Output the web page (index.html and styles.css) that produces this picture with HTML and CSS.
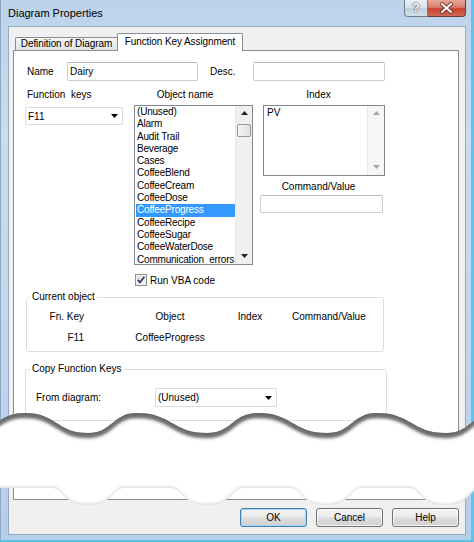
FILE: index.html
```html
<!DOCTYPE html>
<html>
<head>
<meta charset="utf-8">
<title>Diagram Properties</title>
<link rel="stylesheet" href="styles.css">
</head>
<body>
<div class="window">
  <div class="titlebar">
    <span class="title">Diagram Properties</span>
    <div class="caption">
      <div class="cbtn cbtn-help">?</div>
      <div class="cbtn cbtn-close">
        <svg width="37" height="16" viewBox="0 0 37 16">
          <path d="M14 4 L23 12 M23 4 L14 12" stroke="#6a2a22" stroke-width="3.8" stroke-linecap="round"/>
          <path d="M14 4 L23 12 M23 4 L14 12" stroke="#ffffff" stroke-width="2.2" stroke-linecap="round"/>
        </svg>
      </div>
    </div>
  </div>
  <div class="client">
    <div class="tabs">
      <div class="tab">Definition of Diagram</div>
      <div class="tab active">Function Key Assignment</div>
    </div>
    <div class="panel">
      <div class="row-name">
        <span class="lbl lbl-name">Name</span>
        <div class="input name-in">Dairy</div>
        <span class="lbl lbl-desc">Desc.</span>
        <div class="input desc-in"></div>
      </div>
      <div class="cols">
        <div class="col col-fk">
          <div class="col-head">Function&nbsp; keys</div>
          <div class="combo fk-combo"><span>F11</span><svg class="dd" width="7" height="4" viewBox="0 0 7 4"><path d="M0 0 H7 L3.5 4 Z" fill="#000"/></svg></div>
        </div>
        <div class="col col-obj">
          <div class="col-head">Object name</div>
          <div class="listbox obj-list">
            <ul class="items">
              <li>(Unused)</li>
              <li>Alarm</li>
              <li>Audit Trail</li>
              <li>Beverage</li>
              <li>Cases</li>
              <li>CoffeeBlend</li>
              <li>CoffeeCream</li>
              <li>CoffeeDose</li>
              <li class="sel">CoffeeProgress</li>
              <li>CoffeeRecipe</li>
              <li>CoffeeSugar</li>
              <li>CoffeeWaterDose</li>
              <li>Communication_errors</li>
            </ul>
            <div class="vscroll">
              <div class="sb-btn up"><svg width="7" height="4" viewBox="0 0 7 4"><path d="M0 4 H7 L3.5 0 Z" fill="#222"/></svg></div>
              <div class="sb-track"><div class="sb-thumb"></div></div>
              <div class="sb-btn down"><svg width="7" height="4" viewBox="0 0 7 4"><path d="M0 0 H7 L3.5 4 Z" fill="#222"/></svg></div>
            </div>
          </div>
          <div class="check-row">
            <span class="checkbox"><svg width="10" height="10" viewBox="0 0 10 10"><path d="M1.8 4.8 L4 7.4 L8.4 1.8" fill="none" stroke="#31456e" stroke-width="1.8"/></svg></span>
            <span>Run VBA code</span>
          </div>
        </div>
        <div class="col col-idx">
          <div class="col-head">Index</div>
          <div class="listbox idx-list">
            <div class="idx-items">PV</div>
            <div class="vscroll disabled">
              <div class="sb-btn up"><svg width="7" height="4" viewBox="0 0 7 4"><path d="M0 4 H7 L3.5 0 Z" fill="#a6a6a6"/></svg></div>
              <div class="sb-track"></div>
              <div class="sb-btn down"><svg width="7" height="4" viewBox="0 0 7 4"><path d="M0 0 H7 L3.5 4 Z" fill="#a6a6a6"/></svg></div>
            </div>
          </div>
          <div class="col-head cmd-head">Command/Value</div>
          <div class="input cmd-in"></div>
        </div>
      </div>
      <fieldset class="group current">
        <legend>Current object</legend>
        <div class="co-grid">
          <span class="c1">Fn. Key</span><span class="c2">Object</span><span class="c3">Index</span><span class="c4">Command/Value</span>
          <span class="c1">F11</span><span class="c2">CoffeeProgress</span><span class="c3"></span><span class="c4"></span>
        </div>
      </fieldset>
      <fieldset class="group copy">
        <legend>Copy Function Keys</legend>
        <div class="from-row">
          <span class="from-lbl">From diagram:</span>
          <div class="combo from-combo"><span>(Unused)</span><svg class="dd" width="7" height="4" viewBox="0 0 7 4"><path d="M0 0 H7 L3.5 4 Z" fill="#000"/></svg></div>
        </div>
      </fieldset>
    </div>
    <div class="buttons">
      <div class="btn default">OK</div>
      <div class="btn">Cancel</div>
      <div class="btn">Help</div>
    </div>
  </div>
</div>
<svg class="tear" width="474" height="542" viewBox="0 0 474 542">
  <defs>
    <clipPath id="paper">
      <path d="M-33 433 C-4 433 -4 413 25 413 C56.5 413 56.5 433 88 433 C112.5 433 112.5 413 137 413 C172 413 172 433 207 433 C232.5 433 232.5 413 258 413 C292.5 413 292.5 433 327 433 C352 433 352 413 377 413 C411.5 413 411.5 433 446 433 C471 433 471 413 496 413 L496 488 L481 488 C469 488 471 505 445 505 C419 505 421 488 409 488 L362 488 C350 488 352 505 326 505 C300 505 302 488 290 488 L243 488 C231 488 233 505 207 505 C181 505 183 488 171 488 L124 488 C112 488 114 505 88 505 C62 505 64 488 52 488 L-33 488 Z"/>
    </clipPath>
    <filter id="blur" x="-10%" y="-50%" width="120%" height="200%">
      <feGaussianBlur stdDeviation="2.2"/>
    </filter>
    <filter id="blur1" x="-10%" y="-50%" width="120%" height="200%">
      <feGaussianBlur stdDeviation="1"/>
    </filter>
    <filter id="blur2" x="-10%" y="-50%" width="120%" height="200%">
      <feGaussianBlur stdDeviation="1.4"/>
    </filter>
  </defs>
  <path fill="#ffffff" d="M-33 433 C-4 433 -4 413 25 413 C56.5 413 56.5 433 88 433 C112.5 433 112.5 413 137 413 C172 413 172 433 207 433 C232.5 433 232.5 413 258 413 C292.5 413 292.5 433 327 433 C352 433 352 413 377 413 C411.5 413 411.5 433 446 433 C471 433 471 413 496 413 L496 488 L481 488 C469 488 471 505 445 505 C419 505 421 488 409 488 L362 488 C350 488 352 505 326 505 C300 505 302 488 290 488 L243 488 C231 488 233 505 207 505 C181 505 183 488 171 488 L124 488 C112 488 114 505 88 505 C62 505 64 488 52 488 L-33 488 Z"/>
  <g clip-path="url(#paper)">
    <path fill="#3c3c3c" opacity="0.9" filter="url(#blur)" transform="translate(0,4)" d="M-33 433 C-4 433 -4 413 25 413 C56.5 413 56.5 433 88 433 C112.5 433 112.5 413 137 413 C172 413 172 433 207 433 C232.5 433 232.5 413 258 413 C292.5 413 292.5 433 327 433 C352 433 352 413 377 413 C411.5 413 411.5 433 446 433 C471 433 471 413 496 413 L496 380 L-33 380 Z"/>
    <path fill="none" stroke="#6e6e6e" stroke-width="5" opacity="0.75" filter="url(#blur1)" transform="translate(0,2)" d="M-33 433 C-4 433 -4 413 25 413 C56.5 413 56.5 433 88 433 C112.5 433 112.5 413 137 413 C172 413 172 433 207 433 C232.5 433 232.5 413 258 413 C292.5 413 292.5 433 327 433 C352 433 352 413 377 413 C411.5 413 411.5 433 446 433 C471 433 471 413 496 413"/>
    <path fill="#888888" opacity="0.35" filter="url(#blur2)" transform="translate(0,-1)" d="M496 488 L481 488 C469 488 471 505 445 505 C419 505 421 488 409 488 L362 488 C350 488 352 505 326 505 C300 505 302 488 290 488 L243 488 C231 488 233 505 207 505 C181 505 183 488 171 488 L124 488 C112 488 114 505 88 505 C62 505 64 488 52 488 L-33 488 L-33 530 L496 530 Z"/>
  </g>
</svg>
</body>
</html>
```
FILE: styles.css
```css
* { box-sizing: border-box; }
html, body { margin: 0; padding: 0; }
body {
  position: relative;
  width: 474px;
  height: 542px;
  overflow: hidden;
  background: #ffffff;
  font-family: "Liberation Sans", Arial, sans-serif;
  font-size: 10px;
  color: #000;
}

.window {
  width: 474px;
  height: 542px;
  display: flex;
  flex-direction: column;
  padding: 0 5px 5px 8px;
  background: linear-gradient(180deg, #bcd3eb 0%, #c9dcf0 25%, #c2d7ed 60%, #b4cfea 100%);
  border-right: 3px solid #5fc4ec;
  border-bottom: 2px solid #5cbfe8;
  box-shadow: inset 1px 0 0 #8fa6c0;
}

/* title bar */
.titlebar {
  height: 26px;
  flex: none;
  display: flex;
  align-items: flex-start;
}
.title {
  padding-top: 6px;
  font-size: 11px;
  line-height: 14px;
  color: #000;
}
.caption {
  margin-left: auto;
  display: flex;
  height: 17px;
}
.cbtn {
  height: 17px;
  display: flex;
  align-items: center;
  justify-content: center;
}
.cbtn-help {
  width: 24px;
  border: 1px solid #6f7d8f;
  border-top: none;
  border-radius: 0 0 0 4px;
  background: linear-gradient(180deg, #eaf0f6 0%, #d6e0eb 48%, #bfcedd 52%, #d2deea 100%);
  font-family: "Liberation Sans", Arial, sans-serif;
  font-weight: bold;
  font-size: 12px;
  color: #ffffff;
  text-shadow: 0 0 1px #2e3a4c, 0 0 2px #4a5668;
}
.cbtn-close {
  width: 38px;
  border: 1px solid #6b3a37;
  border-top: none;
  border-left: none;
  border-radius: 0 0 4px 0;
  background: linear-gradient(180deg, #e9a797 0%, #d87e6c 45%, #c5432e 55%, #d2695a 100%);
}

/* client */
.client {
  flex: 1;
  background: #f0f0f0;
  border: 1px solid #98a9bd;
  padding: 6px 6px 7px 4px;
  display: flex;
  flex-direction: column;
}

.tabs {
  display: flex;
  align-items: flex-end;
  height: 18px;
  flex: none;
  margin-left: 2px;
  position: relative;
  z-index: 1;
}
.tab {
  flex: none;
  height: 13px;
  width: 102px;
  margin-bottom: 1px;
  border: 1px solid #898c95;
  border-bottom: none;
  border-right: none;
  border-radius: 2px 0 0 0;
  background: linear-gradient(180deg, #f6f6f6, #e3e3e3);
  text-align: center;
  line-height: 12px;
  white-space: nowrap;
  letter-spacing: -0.1px;
}
.tab.active {
  height: 18px;
  width: 126px;
  margin-bottom: 0;
  padding-top: 2px;
  background: #ffffff;
  border-right: 1px solid #898c95;
  border-radius: 2px 2px 0 0;
}

.panel {
  margin-top: -1px;
  height: 450px;
  flex: none;
  border: 1px solid #898c95;
  background: #ffffff;
  padding: 0 0 0 13px;
  overflow: hidden;
}

.row-name {
  display: flex;
  align-items: center;
  margin-top: 11px;
  height: 19px;
}
.lbl-name { width: 40px; }
.lbl-desc { width: 43px; margin-left: 12px; }
.input {
  height: 19px;
  border: 1px solid #c9cdd4;
  border-top-color: #b4b8bf;
  border-radius: 2px;
  background: #ffffff;
  padding-left: 2px;
  line-height: 17px;
}
.name-in { width: 131px; }
.desc-in { width: 132px; }

.cols {
  display: flex;
  margin-top: 8px;
}
.col { display: flex; flex-direction: column; }
.col-fk { width: 96px; }
.col-obj { width: 119px; margin-left: 11px; }
.col-idx { width: 123px; margin-left: 7px; }
.col-head {
  height: 12px;
  line-height: 12px;
  white-space: nowrap;
}
.col-obj .col-head { text-align: center; padding-right: 17px; }
.col-idx .col-head { text-align: center; padding-right: 6px; }

.combo {
  display: flex;
  align-items: center;
  justify-content: space-between;
  background: #ffffff;
  border: 1px solid #d8dbe0;
  height: 18px;
  padding: 0 4px 0 2px;
}
.fk-combo { margin-top: 6px; margin-left: -2px; width: 98px; }

.listbox {
  display: flex;
  margin-top: 4px;
  border: 1px solid #82878f;
  background: #ffffff;
}
.obj-list { height: 160px; }
.items {
  list-style: none;
  margin: 0;
  padding: 0;
  flex: 1;
  overflow: hidden;
}
.items li {
  height: 12.3px;
  line-height: 12.3px;
  margin-left: 1px;
  padding-left: 1px;
  white-space: nowrap;
  letter-spacing: -0.2px;
}
.items li.sel {
  background: #3399ff;
  color: #ffffff;
}

.vscroll {
  width: 17px;
  flex: none;
  display: flex;
  flex-direction: column;
  background: #f0f0f0;
  border-left: 1px solid #e8e8e8;
}
.vscroll.disabled { background: #f6f6f6; }
.sb-btn {
  height: 17px;
  flex: none;
  display: flex;
  justify-content: center;
}
.sb-btn.up { align-items: flex-start; padding-top: 5px; }
.sb-btn.down { align-items: flex-end; padding-bottom: 6px; }
.sb-track { flex: 1; }
.sb-thumb {
  margin: 1px 1px 0 1px;
  height: 13px;
  border: 1px solid #979797;
  border-radius: 2px;
  background: linear-gradient(90deg, #f4f4f4, #e0e0e0);
}

.idx-list { height: 71px; width: 122px; margin-left: 3px; }
.idx-items { flex: 1; padding: 1px 3px; line-height: 12px; }
.cmd-head { margin-top: 5px; }
.cmd-in { margin-top: 2px; height: 18px; width: 123px; }

.check-row {
  display: flex;
  align-items: center;
  gap: 3px;
  margin-top: 9px;
  height: 12px;
  margin-left: 1px;
}
.checkbox {
  width: 12px;
  height: 12px;
  border: 1px solid #8e8f8f;
  background: linear-gradient(135deg, #dcdcdc, #f8f8f8);
  box-shadow: inset 0 0 0 1px #f4f4f4;
  display: flex;
  align-items: center;
  justify-content: center;
}

/* group boxes */
.group {
  margin: 0;
  border: 1px solid #d5dfe5;
  border-radius: 3px;
  min-width: 0;
}
.group legend {
  line-height: 12px;
  padding: 0 2px;
  margin-left: 3px;
}
.current {
  margin-top: 5px;
  margin-left: -1px;
  width: 358px;
  padding: 8px 0 7px 0;
}
.copy {
  margin-top: 11px;
  margin-left: -2px;
  width: 362px;
  padding: 13px 0 13px 10px;
}
.copy legend { margin-left: -6px; }

.co-grid {
  display: grid;
  grid-template-columns: 57px 146px 40px 1fr;
  row-gap: 9px;
  line-height: 12px;
}
.co-grid span { white-space: nowrap; height: 12px; }
.c1 { text-align: right; }
.c2 { text-align: center; padding-left: 26px; }
.c3 { text-align: center; }
.c4 { padding-left: 22px; }

.from-row {
  display: flex;
  align-items: center;
}
.from-lbl { width: 119px; }
.from-combo { width: 122px; height: 19px; }

/* buttons */
.buttons {
  display: flex;
  justify-content: flex-end;
  gap: 9px;
  margin-top: 8px;
}
.btn {
  width: 67px;
  height: 19px;
  border: 1px solid #707070;
  border-radius: 3px;
  background: linear-gradient(180deg, #f3f3f3 0%, #ebebeb 48%, #dddddd 52%, #d0d0d0 100%);
  box-shadow: inset 0 0 0 1px rgba(255, 255, 255, 0.75);
  display: flex;
  align-items: center;
  justify-content: center;
}
.btn.default {
  border-color: #3c7fb1;
  box-shadow: inset 0 0 0 1px #a6d8f4;
}

.tear {
  position: absolute;
  left: 0;
  top: 0;
  pointer-events: none;
}
```
